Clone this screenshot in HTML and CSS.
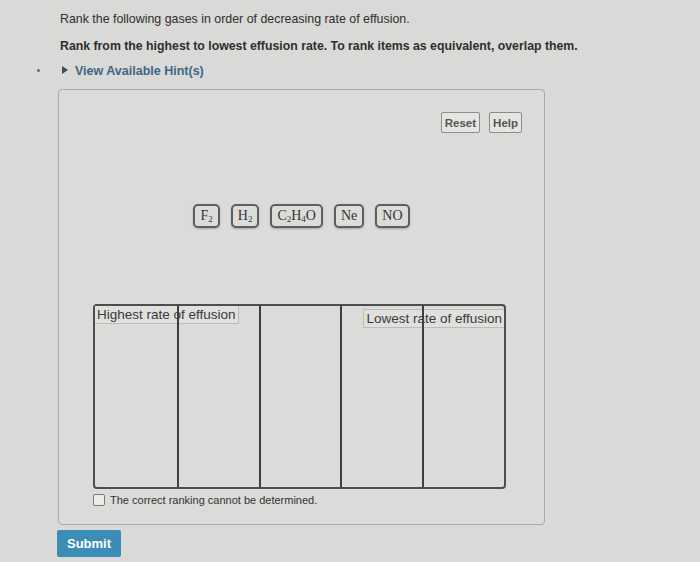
FILE: index.html
```html
<!DOCTYPE html>
<html lang="en">
<head>
    <meta charset="UTF-8">
    <title>Ranking Task</title>
    <link rel="stylesheet" href="styles.css">
</head>
<body>
    <div class="page">
        <p class="prompt">Rank the following gases in order of decreasing rate of effusion.</p>
        <p class="instructions">Rank from the highest to lowest effusion rate. To rank items as equivalent, overlap them.</p>

        <ul class="hints">
            <li><span class="arrow"></span><a href="#">View Available Hint(s)</a></li>
        </ul>

        <div class="panel">
            <div class="toolbar">
                <button class="tool-btn">Reset</button>
                <button class="tool-btn">Help</button>
            </div>

            <div class="items">
                <div class="item">F<sub>2</sub></div>
                <div class="item">H<sub>2</sub></div>
                <div class="item">C<sub>2</sub>H<sub>4</sub>O</div>
                <div class="item">Ne</div>
                <div class="item">NO</div>
            </div>

            <div class="ranking">
                <span class="label label-high">Highest rate of effusion</span>
                <span class="label label-low">Lowest rate of effusion</span>
                <div class="slot"></div>
                <div class="slot"></div>
                <div class="slot"></div>
                <div class="slot"></div>
                <div class="slot"></div>
            </div>

            <label class="undetermined">
                <span class="box"></span>
                The correct ranking cannot be determined.
            </label>
        </div>

        <button class="submit">Submit</button>
    </div>
</body>
</html>
```

FILE: styles.css
```css
body {
    margin: 0;
    background-color: #d9d9d7;
    font-family: "Liberation Sans", Arial, sans-serif;
    color: #2e2e2e;
}
.page {
    padding: 11px 0 0 58px;
}
.prompt {
    margin: 0;
    padding-left: 2px;
    font-size: 12.4px;
    line-height: 16px;
}
.instructions {
    margin: 11px 0 0;
    padding-left: 2px;
    font-size: 12.3px;
    line-height: 16px;
    font-weight: bold;
}
.hints {
    margin: 8px 0 0;
    padding: 0;
    list-style: none;
}
.hints li {
    position: relative;
    height: 16px;
    line-height: 16px;
    padding-left: 17px;
}
.hints li::before {
    content: "";
    position: absolute;
    left: -21px;
    top: 7px;
    width: 3px;
    height: 3px;
    border-radius: 50%;
    background: #6b6b6b;
}
.arrow {
    position: absolute;
    left: 4px;
    top: 4px;
    border-left: 6px solid #3d4f5e;
    border-top: 4px solid transparent;
    border-bottom: 4px solid transparent;
}
.hints a {
    color: #3f6684;
    font-weight: bold;
    font-size: 12.5px;
    text-decoration: none;
}
.panel {
    width: 487px;
    height: 436px;
    margin-top: 11px;
    border: 1px solid #a9a9a7;
    border-radius: 4px;
    background: #dbdbd9;
    box-sizing: border-box;
    padding: 22px 22px 0 34px;
}
.toolbar {
    display: flex;
    justify-content: flex-end;
    gap: 9px;
}
.tool-btn {
    height: 21px;
    padding: 0 3px;
    border: 1px solid #8c8c8a;
    border-radius: 2px;
    background: #e4e4e2;
    font-family: "Liberation Sans", Arial, sans-serif;
    font-size: 11.5px;
    font-weight: bold;
    color: #555;
}
.items {
    display: flex;
    justify-content: center;
    gap: 11px;
    margin: 71px 0 0 -12px;
}
.item {
    height: 24px;
    min-width: 25px;
    padding: 0 5px;
    box-sizing: border-box;
    border: 2px solid #5f5f5f;
    border-radius: 5px;
    background: #dcdcda;
    box-shadow: 0 1px 2px rgba(0, 0, 0, 0.25);
    font-family: "Liberation Serif", "Times New Roman", serif;
    font-size: 14px;
    line-height: 20px;
    color: #333;
    text-align: center;
}
.item sub {
    font-size: 9px;
    line-height: 0;
    vertical-align: -2px;
}
.ranking {
    position: relative;
    display: grid;
    grid-template-columns: repeat(5, 1fr);
    width: 413px;
    height: 185px;
    margin-top: 76px;
    box-sizing: border-box;
    border: 2px solid #4e4e4e;
    border-radius: 4px;
}
.slot {
    position: relative;
    z-index: 1;
    border-left: 2px solid #3e3e3e;
}
.slot:first-of-type {
    border-left: none;
}
.label {
    position: absolute;
    top: 0;
    padding: 0 2px;
    font-size: 13.5px;
    line-height: 17px;
    color: #3a3a3a;
    background: #e0e0de;
    border: 1px solid #bcbcba;
}
.label-high {
    left: 0;
    border-top: none;
    border-left: none;
}
.label-low {
    right: 0;
    top: 3px;
    border-right: none;
}
.undetermined {
    display: flex;
    align-items: center;
    gap: 5px;
    margin-top: 5px;
    font-size: 11px;
    color: #333;
}
.box {
    width: 12px;
    height: 12px;
    box-sizing: border-box;
    border: 1px solid #7a7a78;
    border-radius: 2px;
    background: #ececea;
}
.submit {
    margin-top: 5px;
    margin-left: -1px;
    width: 64px;
    height: 27px;
    border: none;
    border-radius: 2px;
    background: #3b8db6;
    color: #fff;
    font-family: "Liberation Sans", Arial, sans-serif;
    font-size: 13px;
    font-weight: bold;
}
```
